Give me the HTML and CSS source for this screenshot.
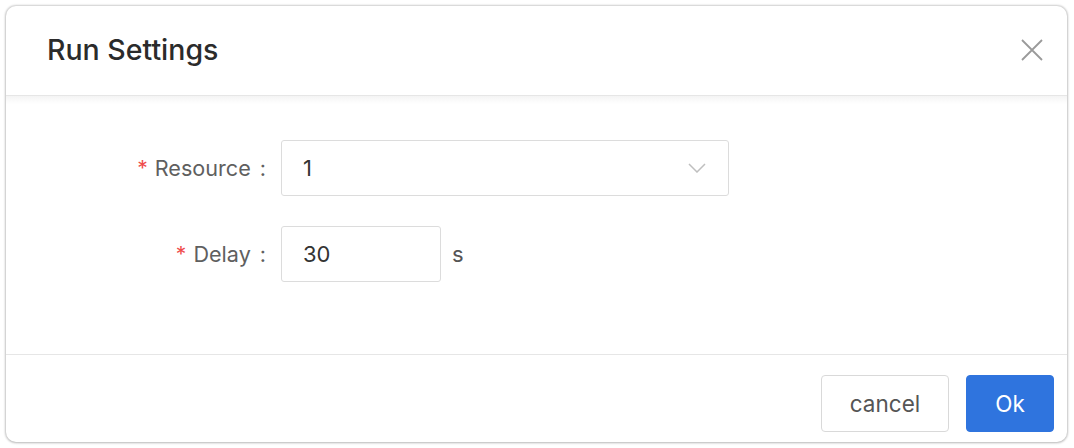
FILE: index.html
```html
<!DOCTYPE html>
<html>
<head>
<meta charset="utf-8">
<link rel="stylesheet" href="styles.css">
</head>
<body>
<div class="modal">
  <div class="modal-header">
    <div class="modal-title">Run Settings</div>
    <button class="close" aria-label="close">
      <svg width="24" height="24" viewBox="0 0 24 24"><path d="M2 2 L22 22 M22 2 L2 22" stroke="#9a9a9a" stroke-width="1.8" fill="none"/></svg>
    </button>
  </div>
  <div class="modal-body">
    <div class="form-row">
      <label class="form-label"><span class="req">*</span> Resource<span class="colon">:</span></label>
      <div class="select">
        <span class="value">1</span>
        <svg class="arrow" width="18" height="10" viewBox="0 0 18 10"><path d="M1 1 L9 9 L17 1" stroke="#bfbfbf" stroke-width="1.5" fill="none"/></svg>
      </div>
    </div>
    <div class="form-row">
      <label class="form-label"><span class="req">*</span> Delay<span class="colon">:</span></label>
      <div class="input"><span class="value">30</span></div>
      <span class="unit">s</span>
    </div>
  </div>
  <div class="modal-footer">
    <button class="btn btn-default">cancel</button>
    <button class="btn btn-primary">Ok</button>
  </div>
</div>
</body>
</html>
```

FILE: styles.css
```css
html, body {
  margin: 0;
  padding: 0;
  background: #ffffff;
}
body {
  font-family: "Inter", "Liberation Sans", sans-serif;
  padding: 6px 7px 6px 6px;
}
.modal {
  width: 1061px;
  height: 436px;
  box-sizing: border-box;
  border-radius: 10px;
  background: #fff;
  box-shadow: 0 0 2px 1px rgba(0,0,0,0.18), 0 1px 3px rgba(0,0,0,0.12);
  display: flex;
  flex-direction: column;
  overflow: hidden;
}
.modal-header {
  height: 90px;
  flex: none;
  box-sizing: border-box;
  border-bottom: 1px solid #e6e6e6;
  display: flex;
  align-items: center;
  justify-content: space-between;
  padding: 0 23px 2px 41px;
}
.modal-title {
  font-size: 28.5px;
  font-weight: 500;
  color: #2b2b2b;
}
.close {
  border: none;
  background: none;
  padding: 0;
  width: 24px;
  height: 24px;
  display: flex;
}
.modal-body {
  flex: 1;
  padding-top: 44px;
  display: flex;
  flex-direction: column;
  gap: 30px;
  background: linear-gradient(#f4f4f4, #ffffff 8px);
}
.form-row {
  display: flex;
  align-items: center;
  height: 56px;
}
.form-label {
  width: 260px;
  flex: none;
  text-align: right;
  font-size: 21.6px;
  color: #5f5f5f;
  margin-right: 15px;
}
.req {
  color: #ef4b4b;
  font-size: 21px;
  margin-right: 1px;
}
.colon {
  margin-left: 9px;
}
.select, .input {
  height: 56px;
  box-sizing: border-box;
  border: 1px solid #dcdcdc;
  border-radius: 3px;
  display: flex;
  align-items: center;
  padding: 0 21px;
  font-size: 22px;
  color: #333;
}
.select {
  width: 448px;
  justify-content: space-between;
  padding-right: 22px;
}
.input {
  width: 160px;
}
.unit {
  margin-left: 11px;
  font-size: 22px;
  color: #555;
}
.modal-footer {
  height: 88px;
  flex: none;
  box-sizing: border-box;
  border-top: 1px solid #e6e6e6;
  display: flex;
  justify-content: flex-end;
  align-items: flex-start;
  gap: 17px;
  padding: 20px 13px 0 0;
}
.btn {
  height: 57px;
  border-radius: 4px;
  font-family: "Inter", "Liberation Sans", sans-serif;
  font-size: 22.5px;
  cursor: pointer;
}
.btn-default {
  width: 128px;
  background: #fff;
  border: 1px solid #d9d9d9;
  color: #555;
}
.btn-primary {
  width: 88px;
  background: #2f74de;
  border: 1px solid #2f74de;
  color: #fff;
}
```
